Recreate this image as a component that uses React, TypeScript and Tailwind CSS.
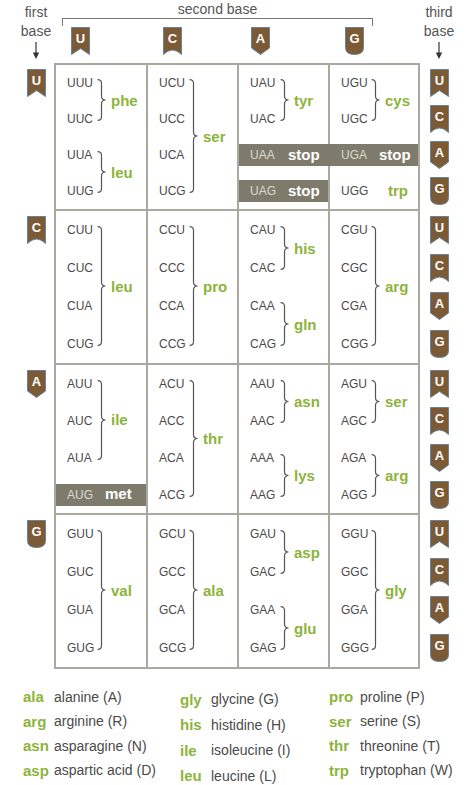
import React from "react";

type Group =
  | { kind: "brace"; codons: string[]; label: string }
  | { kind: "bar"; codon: string; label: string; join?: boolean }
  | { kind: "single"; codon: string; label: string };

type Row = { base: string; slot: number; cells: Group[][] };

const slotCls: Record<number, string> = {
  36: "h-[36px]",
  37: "h-[37px]",
  38: "h-[38px]",
};

const br = (codons: string[], label: string): Group => ({ kind: "brace", codons, label });

const rows: Row[] = [
  {
    base: "U",
    slot: 36,
    cells: [
      [br(["UUU", "UUC"], "phe"), br(["UUA", "UUG"], "leu")],
      [br(["UCU", "UCC", "UCA", "UCG"], "ser")],
      [br(["UAU", "UAC"], "tyr"), { kind: "bar", codon: "UAA", label: "stop" }, { kind: "bar", codon: "UAG", label: "stop" }],
      [br(["UGU", "UGC"], "cys"), { kind: "bar", codon: "UGA", label: "stop", join: true }, { kind: "single", codon: "UGG", label: "trp" }],
    ],
  },
  {
    base: "C",
    slot: 38,
    cells: [
      [br(["CUU", "CUC", "CUA", "CUG"], "leu")],
      [br(["CCU", "CCC", "CCA", "CCG"], "pro")],
      [br(["CAU", "CAC"], "his"), br(["CAA", "CAG"], "gln")],
      [br(["CGU", "CGC", "CGA", "CGG"], "arg")],
    ],
  },
  {
    base: "A",
    slot: 37,
    cells: [
      [br(["AUU", "AUC", "AUA"], "ile"), { kind: "bar", codon: "AUG", label: "met" }],
      [br(["ACU", "ACC", "ACA", "ACG"], "thr")],
      [br(["AAU", "AAC"], "asn"), br(["AAA", "AAG"], "lys")],
      [br(["AGU", "AGC"], "ser"), br(["AGA", "AGG"], "arg")],
    ],
  },
  {
    base: "G",
    slot: 38,
    cells: [
      [br(["GUU", "GUC", "GUA", "GUG"], "val")],
      [br(["GCU", "GCC", "GCA", "GCG"], "ala")],
      [br(["GAU", "GAC"], "asp"), br(["GAA", "GAG"], "glu")],
      [br(["GGU", "GGC", "GGA", "GGG"], "gly")],
    ],
  },
];

const legend = [
  [["ala", "alanine (A)"], ["arg", "arginine (R)"], ["asn", "asparagine (N)"], ["asp", "aspartic acid (D)"]],
  [["gly", "glycine (G)"], ["his", "histidine (H)"], ["ile", "isoleucine (I)"], ["leu", "leucine (L)"]],
  [["pro", "proline (P)"], ["ser", "serine (S)"], ["thr", "threonine (T)"], ["trp", "tryptophan (W)"]],
];

// bottom shapes of the little base tags
const tagPath: Record<string, string> = {
  U: "M0.5,0.5 H18.5 V27.5 L9.5,21.5 L0.5,27.5 Z",
  C: "M0.5,0.5 H18.5 V27.5 Q9.5,18.5 0.5,27.5 Z",
  A: "M0.5,0.5 H18.5 V21 L9.5,27.5 L0.5,21 Z",
  G: "M0.5,0.5 H18.5 V20.5 Q18.5,27.5 9.5,27.5 Q0.5,27.5 0.5,20.5 Z",
};

function Tag({ b }: { b: string }) {
  return (
    <div className="relative w-[19px] h-[28px] shrink-0">
      <svg width="19" height="28" viewBox="0 0 19 28">
        <path d={tagPath[b]} fill="#7c5a35" stroke="#66839b" strokeWidth="1" />
      </svg>
      <span className="absolute left-0 top-[3px] w-[19px] text-center text-[13px] leading-[18px] font-bold text-white">
        {b}
      </span>
    </div>
  );
}

function Arrow() {
  return (
    <svg width="8" height="17" viewBox="0 0 8 17">
      <line x1="4" y1="0" x2="4" y2="12" stroke="#333" strokeWidth="1.2" />
      <path d="M0.8,10.5 L7.2,10.5 L4,17 Z" fill="#333" />
    </svg>
  );
}

function Brace({ h }: { h: number }) {
  const m = h / 2;
  const d = `M0.6,0.6 Q4.5,0.6 4.5,4.5 L4.5,${m - 4} Q4.5,${m} 8.5,${m} Q4.5,${m} 4.5,${m + 4} L4.5,${h - 4.5} Q4.5,${h - 0.6} 0.6,${h - 0.6}`;
  return (
    <svg width="9" height={h} viewBox={`0 0 9 ${h}`} className="block">
      <path d={d} fill="none" stroke="#555" strokeWidth="1.2" />
    </svg>
  );
}

function GroupView({ g, slot }: { g: Group; slot: number }) {
  const sc = slotCls[slot];
  if (g.kind === "bar") {
    return (
      <div className={`${sc} flex items-center`}>
        <div
          className={`h-[22px] flex items-center bg-[#7f7b6c] ${g.join ? "-ml-[2px] pl-[13px]" : "pl-[11px]"} w-full`}
          style={g.join ? { width: "calc(100% + 2px)" } : undefined}
        >
          <span className="w-[28px] text-[12px] text-[#dcd9d0]">{g.codon}</span>
          <span className="ml-[10px] text-[15px] font-bold text-white">{g.label}</span>
        </div>
      </div>
    );
  }
  if (g.kind === "single") {
    return (
      <div className={`${sc} flex items-center pl-[11px]`}>
        <span className="w-[28px] text-[12px] text-[#4a4a4a]">{g.codon}</span>
        <span className="ml-[19px] text-[15px] font-bold text-[#8cb43c]">{g.label}</span>
      </div>
    );
  }
  const n = g.codons.length;
  return (
    <div className="flex pl-[11px]">
      <div className="w-[28px] flex flex-col">
        {g.codons.map((c) => (
          <div key={c} className={`${sc} flex items-center text-[12px] text-[#4a4a4a]`}>
            {c}
          </div>
        ))}
      </div>
      <div className="ml-[2px]" style={{ paddingTop: slot / 2 - 4 }}>
        <Brace h={(n - 1) * slot + 6} />
      </div>
      <div className="ml-[5px] flex items-center text-[15px] font-bold text-[#8cb43c]">{g.label}</div>
    </div>
  );
}

const headPad = ["pl-[15px]", "pl-[17px]", "pl-[14px]", "pl-[17px]"];
const bases = ["U", "C", "A", "G"];

export default function App() {
  return (
    <div className="w-[474px] h-[785px] bg-white overflow-hidden" style={{ fontFamily: '"Liberation Sans", Arial, sans-serif' }}>
      {/* header */}
      <div className="flex h-[63px]">
        <div className="w-[54px]">
          <div className="ml-[17px] w-[38px] pt-[3px] flex flex-col items-center text-[14px] leading-[19px] text-[#555]">
            <span>first</span>
            <span>base</span>
            <div className="mt-[1px]">
              <Arrow />
            </div>
          </div>
        </div>
        <div className="w-[366px]">
          <div className="ml-[8px] w-[311px] text-center text-[14px] leading-[18px] text-[#555]">second base</div>
          <div className="ml-[8px] w-[311px] h-[8px] border-x-[1.5px] border-t-[1.5px] border-[#777]" />
          <div className="mt-[1px] px-[2px] grid grid-cols-[90px_91px_91px_90px]">
            {bases.map((b, i) => (
              <div key={b} className={headPad[i]}>
                <Tag b={b} />
              </div>
            ))}
          </div>
        </div>
        <div className="w-[54px]">
          <div className="w-[38px] pt-[3px] flex flex-col items-center text-[14px] leading-[19px] text-[#555]">
            <span>third</span>
            <span>base</span>
            <div className="mt-[1px]">
              <Arrow />
            </div>
          </div>
        </div>
      </div>

      {/* codon table */}
      {rows.map((r, ri) => (
        <div key={r.base} className="flex">
          <div className="w-[54px] pl-[27px] pt-[2px]">
            <div className={`${slotCls[r.slot]} flex items-center`}>
              <Tag b={r.base} />
            </div>
          </div>
          <div
            className={`w-[366px] grid grid-cols-[90px_91px_91px_90px] border-x-2 border-t-2 border-[#aba89f] ${
              ri === rows.length - 1 ? "border-b-2" : ""
            }`}
          >
            {r.cells.map((cell, ci) => (
              <div key={ci} className={`flex flex-col ${ci > 0 ? "border-l-2 border-[#aba89f]" : ""}`}>
                {cell.map((g, gi) => (
                  <GroupView key={gi} g={g} slot={r.slot} />
                ))}
              </div>
            ))}
          </div>
          <div className="w-[54px] pl-[10px] pt-[2px] flex flex-col">
            {bases.map((b) => (
              <div key={b} className={`${slotCls[r.slot]} flex items-center`}>
                <Tag b={b} />
              </div>
            ))}
          </div>
        </div>
      ))}

      {/* legend */}
      <div className="mt-[16px] pl-[23px] flex">
        {legend.map((col, i) => (
          <div
            key={i}
            className={`flex flex-col ${i === 0 ? "w-[157px]" : i === 1 ? "w-[149px] pt-[2px]" : ""}`}
          >
            {col.map(([a, name]) => (
              <div key={a} className={`flex items-center ${i === 1 ? "h-[25.5px]" : "h-[24.5px]"}`}>
                <span className="w-[31px] text-[15px] font-bold text-[#8cb43c]">{a}</span>
                <span className="text-[14px] text-[#4a4a4a]">{name}</span>
              </div>
            ))}
          </div>
        ))}
      </div>
    </div>
  );
}
